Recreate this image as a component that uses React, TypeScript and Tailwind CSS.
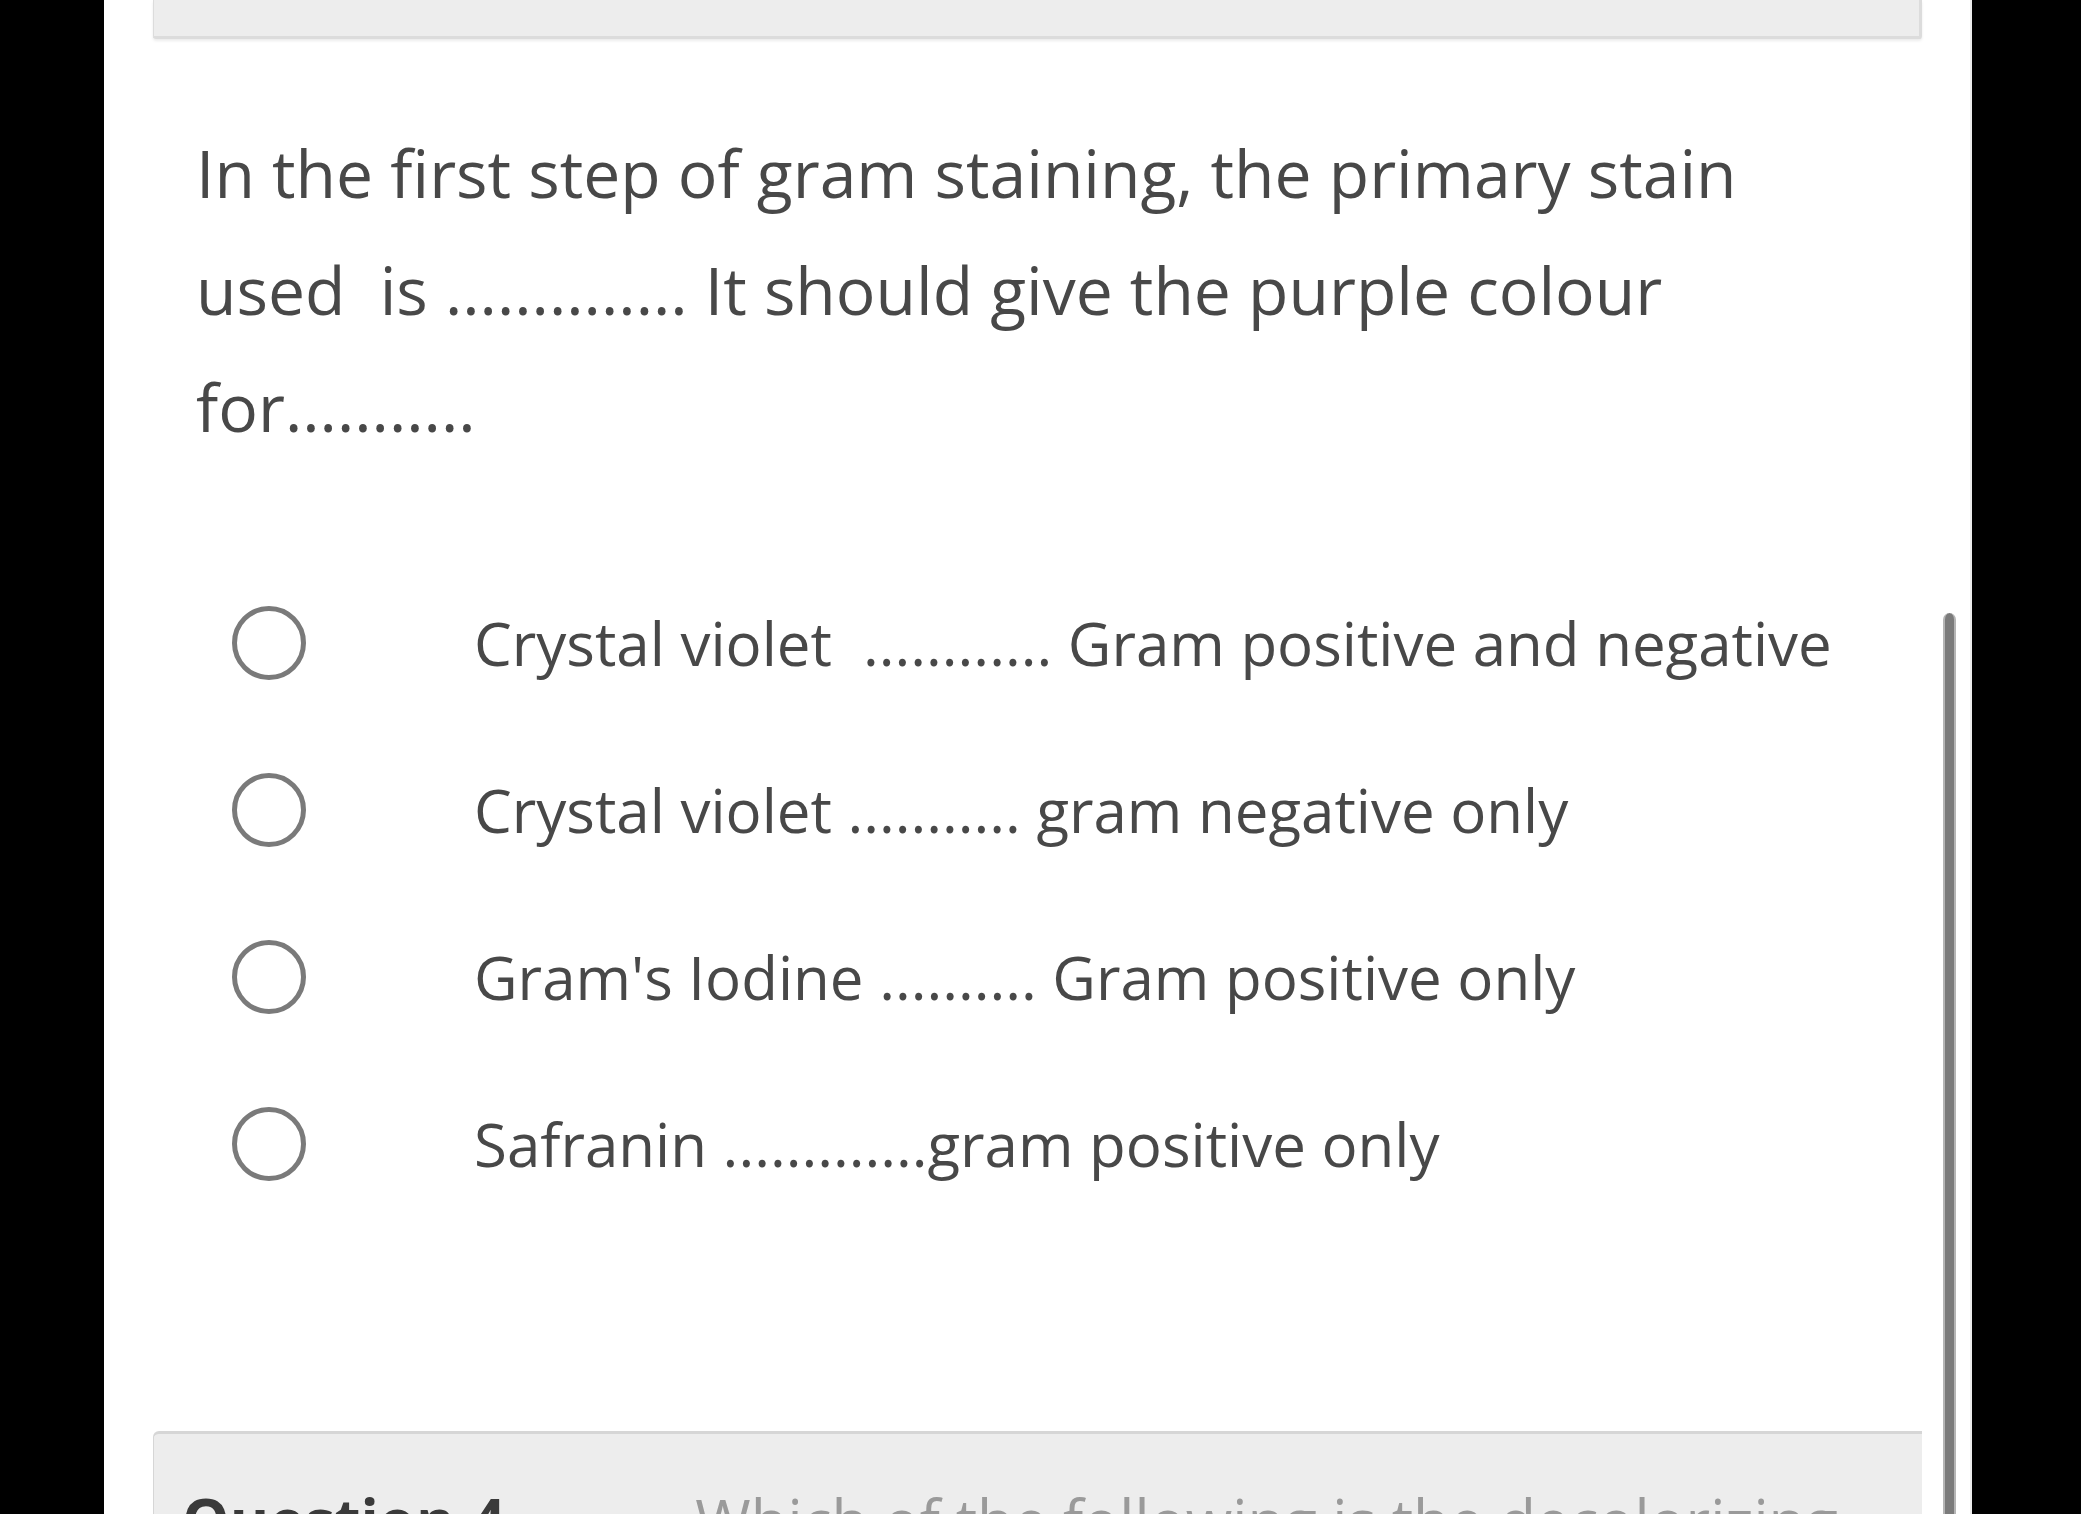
import React from "react";

const options = [
  "Crystal violet  ............ Gram positive and negative",
  "Crystal violet ........... gram negative only",
  "Gram's Iodine .......... Gram positive only",
  "Safranin .............gram positive only",
];

function Radio() {
  return (
    <span className="block h-[74px] w-[74px] shrink-0 rounded-full border-[5px] border-[#7a7a7a] bg-white" />
  );
}

export default function App() {
  return (
    <div
      className="flex h-[1514px] w-full overflow-hidden bg-black"
      style={{ fontFamily: '"Open Sans", "Noto Sans", sans-serif' }}
    >
      <div className="w-[104px] shrink-0" />
      <main className="relative flex w-[1868px] shrink-0 flex-col bg-white pl-[49px] pr-[50px]">
        {/* previous question card, cut off at the top */}
        <div className="h-[39px] shrink-0 rounded-b-[3px] border-b-[3px] border-r-[3px] border-l border-[#dcdcdc] bg-[#ededed] shadow-[0_2px_3px_rgba(0,0,0,0.08)]" />

        <p className="mt-[75px] whitespace-pre pl-[43px] text-[66px] leading-[117px] text-[#484848]">
          In the first step of gram staining, the primary stain
          <br />
          {"used  is .............. It should give the purple colour"}
          <br />
          for...........
        </p>

        <ul className="mt-[94px] flex flex-col">
          {options.map((o) => (
            <li key={o} className="flex h-[167px] items-center pl-[79px]">
              <Radio />
              <span className="ml-[168px] whitespace-pre text-[60px] text-[#484848]">{o}</span>
            </li>
          ))}
        </ul>

        {/* next question card */}
        <section className="mt-[204px] flex-1 rounded-tl-[6px] border-t-[3px] border-l border-[#d6d6d6] bg-[#ededed] pl-[28px] pt-[56px]">
          <div className="flex items-baseline gap-[190px] text-[60px] leading-none">
            <span className="font-bold text-[#3a3a3a]">Question 4</span>
            <span className="text-[#9a9a9a]">Which of the following is the decolorizing</span>
          </div>
        </section>

        {/* scrollbar */}
        <div className="absolute bottom-0 left-[1839px] top-[613px] w-[13px] rounded-t-full border-x-[2px] border-[#b5b5b5] bg-[#7b7b7b]" />
        <div className="absolute bottom-0 right-0 top-0 w-[2px] bg-[#ececec]" />
      </main>
      <div className="flex-1" />
    </div>
  );
}
